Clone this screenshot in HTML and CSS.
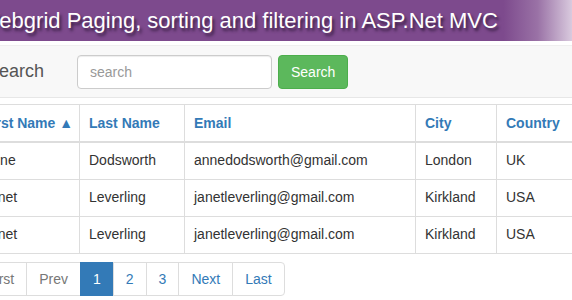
FILE: index.html
```html
<!DOCTYPE html>
<html>
<head>
<meta charset="utf-8">
<link rel="stylesheet" href="styles.css">
</head>
<body>
<div class="banner"><h1 class="banner-title">Webgrid Paging, sorting and filtering in ASP.Net MVC</h1></div>
<div class="page">
  <div class="searchbar">
    <span class="brand">Search</span>
    <input class="search-input" type="text" placeholder="search">
    <button class="btn-search">Search</button>
  </div>
  <table class="grid">
    <thead>
      <tr>
        <th class="c1">First Name ▲</th>
        <th class="c2">Last Name</th>
        <th class="c3">Email</th>
        <th class="c4">City</th>
        <th class="c5">Country</th>
      </tr>
    </thead>
    <tbody>
      <tr><td>Anne</td><td>Dodsworth</td><td>annedodsworth@gmail.com</td><td>London</td><td>UK</td></tr>
      <tr><td>Janet</td><td>Leverling</td><td>janetleverling@gmail.com</td><td>Kirkland</td><td>USA</td></tr>
      <tr><td>Janet</td><td>Leverling</td><td>janetleverling@gmail.com</td><td>Kirkland</td><td>USA</td></tr>
    </tbody>
  </table>
  <ul class="pagination">
    <li class="pg disabled">First</li>
    <li class="pg disabled">Prev</li>
    <li class="pg active">1</li>
    <li class="pg">2</li>
    <li class="pg">3</li>
    <li class="pg">Next</li>
    <li class="pg last">Last</li>
  </ul>
</div>
</body>
</html>
```
FILE: styles.css
```css
html, body {
  margin: 0;
  padding: 0;
  background: #fff;
  overflow: hidden;
}
body {
  font-family: "Liberation Sans", Arial, sans-serif;
  font-size: 14px;
  line-height: 1.42857;
  color: #333;
  width: 572px;
  height: 300px;
}
.banner {
  height: 41px;
  background: linear-gradient(to right, #7d4a8d 0%, #7d4a8d 88%, #9a72a6 94%, #d9cade 100%);
  overflow: hidden;
  white-space: nowrap;
}
.banner-title {
  margin: 0 0 0 -21px;
  font-size: 22px;
  font-weight: normal;
  line-height: 41px;
  color: #fff;
  text-shadow: 2px 3px 3px #3a1f45;
}
.page {
  margin-left: -27px;
  padding-top: 4px;
}
.searchbar {
  display: flex;
  align-items: center;
  height: 51px;
  background: #f8f8f8;
  border-top: 1px solid #efefef;
  border-bottom: 1px solid #e7e7e7;
}
.brand {
  font-size: 18px;
  color: #555;
  margin-left: 14px;
  width: 90px;
}
.search-input {
  box-sizing: border-box;
  width: 195px;
  height: 34px;
  padding: 6px 12px;
  font-family: inherit;
  font-size: 14px;
  border: 1px solid #ccc;
  border-radius: 4px;
  background: #fff;
  box-shadow: inset 0 1px 1px rgba(0,0,0,.075);
  margin: 0;
}
.search-input::placeholder { color: #999; }
.btn-search {
  box-sizing: border-box;
  margin-left: 6px;
  height: 34px;
  width: 70px;
  padding: 6px 12px;
  font-family: inherit;
  font-size: 14px;
  color: #fff;
  background: #5cb85c;
  border: 1px solid #4cae4c;
  border-radius: 4px;
}
.grid {
  margin-top: 6px;
  border-collapse: collapse;
  table-layout: fixed;
  width: 700px;
}
.grid th, .grid td {
  border: 1px solid #ddd;
  padding: 8px 9px;
  text-align: left;
  white-space: nowrap;
  overflow: hidden;
}
.grid th {
  color: #337ab7;
  font-weight: bold;
  border-bottom: 2px solid #ddd;
  border-top: 1px solid #ddd;
  padding-top: 9px;
  padding-bottom: 7px;
}
.c1 { width: 87px; }
.c2 { width: 86px; }
.c3 { width: 212px; }
.c4 { width: 62px; }
.c5 { width: 180px; }
.pagination {
  display: flex;
  list-style: none;
  margin: 8px 0 0 1px;
  padding: 0;
}
.pg {
  padding: 6px 12px;
  line-height: 20px;
  color: #337ab7;
  background: #fff;
  border: 1px solid #ddd;
  margin-left: -1px;
}
.pg:first-child { margin-left: 0; border-radius: 4px 0 0 4px; }
.pg.last { border-radius: 0 4px 4px 0; }
.pg.disabled { color: #777; }
.pg.active { background: #337ab7; border-color: #337ab7; color: #fff; }
```
